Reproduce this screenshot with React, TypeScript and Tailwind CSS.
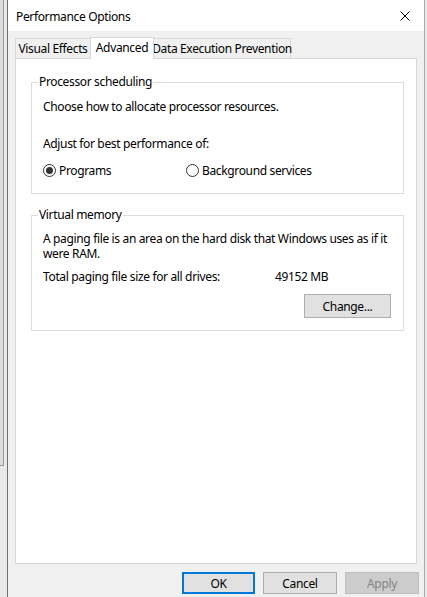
import React from 'react';

const FONT = "font-['Noto_Sans',sans-serif] text-[12px] leading-[15px] tracking-[-0.35px] text-black whitespace-nowrap";

function Radio({ checked, label }: { checked?: boolean; label: string }) {
  return (
    <label className="flex items-center gap-[3px]">
      <span className="flex h-[13px] w-[13px] items-center justify-center rounded-full border border-[#333333] bg-white">
        {checked && <span className="h-[7px] w-[7px] rounded-full bg-[#333333]" />}
      </span>
      <span>{label}</span>
    </label>
  );
}

function Tab({ label, active, className }: { label: string; active?: boolean; className: string }) {
  return (
    <div
      className={`flex items-center justify-center border-[#d9d9d9] ${
        active ? 'relative z-10 -mb-px h-[22px] bg-white pb-[3px]' : 'h-[20px] bg-[#f0f0f0]'
      } ${className}`}
    >
      {label}
    </div>
  );
}

function Button({ children, variant }: { children: React.ReactNode; variant?: 'default' | 'disabled' }) {
  const tone =
    variant === 'default'
      ? 'border-2 border-[#0078d7] bg-[#e1e1e1] text-black'
      : variant === 'disabled'
        ? 'border border-[#bfbfbf] bg-[#cccccc] text-[#838383]'
        : 'border border-[#adadad] bg-[#e1e1e1] text-black';
  return <button className={`flex h-[22px] w-full items-center justify-center ${tone}`}>{children}</button>;
}

export default function App() {
  return (
    <div className={`flex h-[597px] w-[427px] overflow-hidden bg-[#e9e9e9] ${FONT}`}>
      {/* window behind, just its edge */}
      <div className="w-[7px] shrink-0">
        <div className="h-[466px] w-[4px] border-r border-b border-[#9a9a9a] bg-[#dcdcdc]" />
      </div>

      <div className="flex w-[418px] shrink-0 flex-col border-l border-r border-l-[#6f6f6f] border-r-[#a8a8a8] bg-[#f0f0f0]">
        <div className="flex h-[31px] items-center justify-between bg-white pl-[8px] pr-[7px]">
          <span className="pt-[1px]">Performance Options</span>
          <svg width="10" height="10" viewBox="0 0 10 10" className="mr-[7px]" aria-hidden>
            <path d="M0.5 0.5 L9.5 9.5 M9.5 0.5 L0.5 9.5" stroke="#000" strokeWidth="1" />
          </svg>
        </div>

        <div className="flex flex-col px-[7px] pt-[6px]">
          <div className="flex items-end">
            <Tab label="Visual Effects" className="w-[75px] border-l border-t" />
            <Tab label="Advanced" active className="w-[64px] border-l border-r border-t" />
            <Tab label="Data Execution Prevention" className="w-[137px] border-r border-t" />
          </div>

          <div className="flex h-[506px] w-[402px] flex-col border border-[#d9d9d9] bg-white pl-[15px] pt-[16px]">
            <fieldset className="w-[373px] border border-[#dcdcdc] pb-[15px] pl-[11px]">
              <legend className="-ml-[5px] px-[1px] leading-[14px]">Processor scheduling</legend>
              <p className="pt-[10px]">Choose how to allocate processor resources.</p>
              <p className="pt-[22px]">Adjust for best performance of:</p>
              <div className="flex pt-[12px]">
                <div className="w-[143px]">
                  <Radio checked label="Programs" />
                </div>
                <Radio label="Background services" />
              </div>
            </fieldset>

            <fieldset className="mt-[14px] w-[373px] border border-[#dcdcdc] pb-[12px] pl-[11px] pr-[12px]">
              <legend className="-ml-[5px] px-[1px] leading-[14px]">Virtual memory</legend>
              <p className="pt-[9px]">
                A paging file is an area on the hard disk that Windows uses as if it
                <br />
                were RAM.
              </p>
              <div className="flex pt-[8px]">
                <span className="w-[232px]">Total paging file size for all drives:</span>
                <span>49152 MB</span>
              </div>
              <div className="flex justify-end pt-[10px]">
                <button className="h-[24px] w-[87px] border border-[#adadad] bg-[#e1e1e1]">Change...</button>
              </div>
            </fieldset>
          </div>

          <div className="mt-[8px] flex justify-end gap-[8px]">
            <div className="w-[73px]">
              <Button variant="default">OK</Button>
            </div>
            <div className="w-[74px]">
              <Button>Cancel</Button>
            </div>
            <div className="-mr-[2px] w-[74px]">
              <Button variant="disabled">Apply</Button>
            </div>
          </div>
        </div>
      </div>
    </div>
  );
}
